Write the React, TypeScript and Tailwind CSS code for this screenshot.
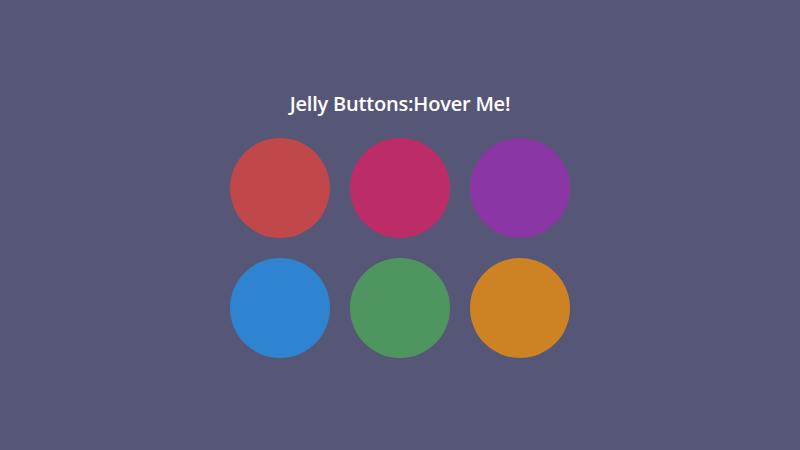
const buttons = [
  "bg-[#c1484a]",
  "bg-[#bc2d68]",
  "bg-[#8a37a5]",
  "bg-[#2f84d2]",
  "bg-[#4f955f]",
  "bg-[#cd8323]",
];

export default function App() {
  return (
    <div className="flex h-[450px] w-full flex-col items-center bg-[#565777] pt-[92px]">
      <h1 className="font-['Open_Sans',sans-serif] text-[20px] leading-[24px] font-semibold tracking-[-0.2px] text-white">
        Jelly Buttons:Hover Me!
      </h1>
      <div className="mt-[22px] grid grid-cols-3 gap-5">
        {buttons.map((color) => (
          <button
            key={color}
            className={`h-[100px] w-[100px] cursor-pointer rounded-full ${color}`}
          />
        ))}
      </div>
    </div>
  );
}
